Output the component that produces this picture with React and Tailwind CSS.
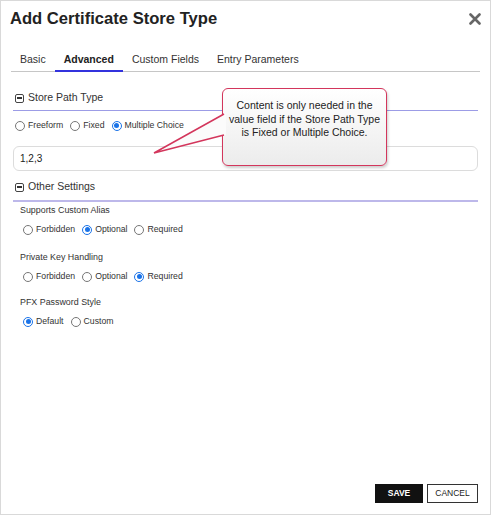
import React from 'react';

const Radio = ({ label, checked }) => (
  <label className="flex items-center gap-[3px] text-[8.7px] text-[#333]">
    {checked ? (
      <span className="w-[10px] h-[10px] rounded-full border-[1.5px] border-[#1a73e8] flex items-center justify-center">
        <span className="w-[5px] h-[5px] rounded-full bg-[#1a73e8]"></span>
      </span>
    ) : (
      <span className="w-[10px] h-[10px] rounded-full border border-[#767676] bg-white"></span>
    )}
    <span>{label}</span>
  </label>
);

const RadioRow = ({ options, selected, className }) => (
  <div className={`flex items-center gap-[7px] h-[14px] ${className}`}>
    {options.map((opt) => (
      <Radio key={opt} label={opt} checked={opt === selected} />
    ))}
  </div>
);

const SectionHeader = ({ title, lineClass }) => (
  <div className={`flex items-center gap-[4px] pl-[2px] h-[14px] ${lineClass}`}>
    <span className="w-[9px] h-[9px] rounded-[2px] border border-[#444] flex items-center justify-center">
      <span className="w-[5px] h-[1.5px] bg-[#333]"></span>
    </span>
    <span className="text-[10.5px] text-[#333]">{title}</span>
  </div>
);

const App = () => {
  const tabs = ['Basic', 'Advanced', 'Custom Fields', 'Entry Parameters'];

  return (
    <div
      className="relative w-[491px] h-[515px] bg-white border border-[#d9d9d9] flex flex-col"
      style={{ fontFamily: '"Liberation Sans", Arial, sans-serif' }}
    >
      {/* title */}
      <div className="flex items-center justify-between pl-[9px] pr-[8px] pt-[7px] h-[28px]">
        <h1 className="text-[16.6px] font-bold text-[#222] leading-[20px]">Add Certificate Store Type</h1>
        <svg width="12" height="12" viewBox="0 0 12 12" className="mr-[1px]">
          <path d="M1.5 1.5 L10.5 10.5 M10.5 1.5 L1.5 10.5" stroke="#666" strokeWidth="2.6" strokeLinecap="round" />
        </svg>
      </div>

      {/* tabs */}
      <div className="mx-[10px] mt-[20px] flex border-b border-[#c6c6c6]">
        {tabs.map((tab) => (
          <div
            key={tab}
            className={`h-[23px] px-[9px] -mb-px flex items-center text-[10.5px] ${
              tab === 'Advanced'
                ? 'font-bold text-[#222] border-b-2 border-[#3333dd]'
                : 'text-[#333] border-b-2 border-transparent'
            }`}
          >
            {tab}
          </div>
        ))}
      </div>

      {/* content */}
      <div className="px-[12px] mt-[19px]">
        <SectionHeader title="Store Path Type" lineClass="box-content pb-[5px] border-b border-[#9c9ce6]" />
        <RadioRow
          className="mt-[8px] pl-[2px]"
          options={['Freeform', 'Fixed', 'Multiple Choice']}
          selected="Multiple Choice"
        />
        <div className="mt-[13px] h-[25px] rounded-[6px] border border-[#dcdcdc] flex items-center px-[6px] text-[10px] text-[#222]">
          1,2,3
        </div>

        <SectionHeader title="Other Settings" lineClass="mt-[9px] box-content pb-[6px] border-b-2 border-[#bdb8ea]" />

        <div className="pl-[7px]">
          <div className="mt-[3px] h-[12px] flex items-center text-[8.9px] text-[#333]">Supports Custom Alias</div>
          <RadioRow
            className="mt-[6px] pl-[3px]"
            options={['Forbidden', 'Optional', 'Required']}
            selected="Optional"
          />
          <div className="mt-[15px] h-[12px] flex items-center text-[8.9px] text-[#333]">Private Key Handling</div>
          <RadioRow
            className="mt-[6px] pl-[3px]"
            options={['Forbidden', 'Optional', 'Required']}
            selected="Required"
          />
          <div className="mt-[13px] h-[12px] flex items-center text-[8.9px] text-[#333]">PFX Password Style</div>
          <RadioRow className="mt-[6px] pl-[3px]" options={['Default', 'Custom']} selected="Default" />
        </div>
      </div>

      <div className="flex-1"></div>

      {/* footer */}
      <div className="flex justify-end gap-[4px] pr-[12px] pb-[11px]">
        <button className="w-[48px] h-[19px] bg-[#111] text-white text-[8.5px] font-bold">SAVE</button>
        <button className="w-[51px] h-[19px] bg-white border border-[#333] text-[#222] text-[8.5px]">CANCEL</button>
      </div>

      {/* callout */}
      <div className="absolute left-[221px] top-[87px] w-[165px] h-[78px] rounded-[6px] border-[1.5px] border-[#d3365c] bg-gradient-to-b from-white to-[#ececec] shadow-[1px_2px_3px_rgba(0,0,0,0.2)] pt-[10px] px-[4px] text-center text-[10.5px] leading-[13.6px] text-[#222]">
        Content is only needed in the value field if the Store Path Type is Fixed or Multiple Choice.
      </div>
      <svg className="absolute left-[150px] top-[108px]" width="80" height="50" viewBox="0 0 80 50">
        <path d="M75 4 L3 44 L75 26 Z" fill="#fbfbfb" />
        <path d="M73 5 L3 44 L73 26" fill="none" stroke="#d3365c" strokeWidth="1.5" strokeLinejoin="miter" />
      </svg>
    </div>
  );
};

export default App;
